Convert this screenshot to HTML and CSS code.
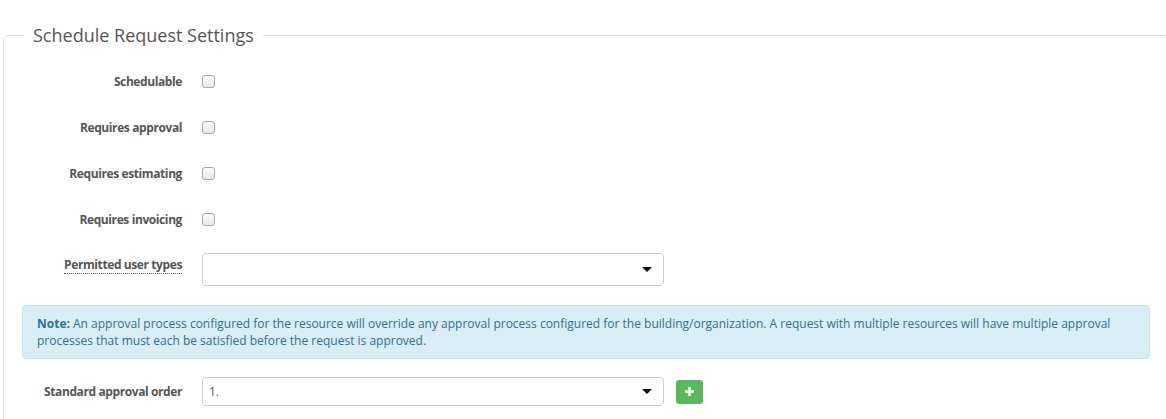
FILE: index.html
```html
<!DOCTYPE html>
<html>
<head>
<meta charset="utf-8">
<link rel="stylesheet" href="styles.css">
</head>
<body>
<fieldset class="settings">
  <legend class="settings-legend">Schedule Request Settings</legend>
  <div class="row row-check row-first">
    <label class="lbl">Schedulable</label>
    <div class="ctrl"><span class="checkbox"></span></div>
  </div>
  <div class="row row-check">
    <label class="lbl">Requires approval</label>
    <div class="ctrl"><span class="checkbox"></span></div>
  </div>
  <div class="row row-check">
    <label class="lbl">Requires estimating</label>
    <div class="ctrl"><span class="checkbox"></span></div>
  </div>
  <div class="row row-check">
    <label class="lbl">Requires invoicing</label>
    <div class="ctrl"><span class="checkbox"></span></div>
  </div>
  <div class="row row-select">
    <label class="lbl lbl-dotted"><span>Permitted user types</span></label>
    <div class="ctrl">
      <div class="select select-tall"><span class="select-value"></span><span class="caret"></span></div>
    </div>
  </div>
  <div class="note">
    <strong>Note:</strong> An approval process configured for the resource will override any approval process configured for the building/organization. A request with multiple resources will have multiple approval processes that must each be satisfied before the request is approved.
  </div>
  <div class="row row-order">
    <label class="lbl">Standard approval order</label>
    <div class="ctrl ctrl-inline">
      <div class="select select-short"><span class="select-value">1.</span><span class="caret"></span></div>
      <button class="add-btn" type="button">
        <svg width="11" height="11" viewBox="0 0 11 11"><path d="M5.5 1v9M1 5.5h9" stroke="#fff" stroke-width="2.6" fill="none"/></svg>
      </button>
    </div>
  </div>
</fieldset>
</body>
</html>
```

FILE: styles.css
```css
html, body {
  margin: 0;
  padding: 0;
  background: #fff;
}
body {
  font-family: "Open Sans", "Noto Sans", sans-serif;
  color: #555;
  font-size: 12px;
  overflow: hidden;
}
.settings {
  margin: 23px -20px 0 3px;
  padding: 11px 0 20px 0;
  border: 1px solid #e3e3e3;
  border-radius: 5px 0 0 0;
  min-width: 0;
}
.settings-legend {
  margin-left: 20px;
  padding: 0 9px;
  font-size: 18px;
  color: #555;
  font-weight: normal;
  line-height: 24px;
}
.row {
  display: flex;
  align-items: center;
}
.lbl {
  width: 178px;
  text-align: right;
  font-weight: bold;
  font-size: 12px;
  letter-spacing: -0.4px;
  color: #555;
  flex: none;
}
.ctrl {
  margin-left: 20px;
}
.row-check {
  height: 46px;
}
.checkbox {
  display: block;
  width: 11px;
  height: 11px;
  border: 1px solid #a9a9a9;
  border-radius: 3px;
  background: linear-gradient(#fcfcfc, #e8e8e8);
}
.row-select {
  margin-top: 11px;
  align-items: flex-start;
}
.lbl-dotted span {
  border-bottom: 1px dotted #555;
  line-height: 16px;
  display: inline-block;
  margin-top: 4px;
}
.select {
  box-sizing: border-box;
  width: 462px;
  border: 1px solid #ccc;
  border-radius: 4px;
  display: flex;
  align-items: center;
  justify-content: space-between;
  padding: 0 11px 0 6px;
  background: #fff;
  color: #555;
  font-size: 12px;
}
.select-tall {
  height: 33px;
}
.select-short {
  height: 29px;
}
.caret {
  width: 0;
  height: 0;
  border-left: 5px solid transparent;
  border-right: 5px solid transparent;
  border-top: 5px solid #000;
}
.note {
  margin: 19px 35px 0 18px;
  padding: 9px 14px 9px 14px;
  background: #d9edf7;
  border: 1px solid #bce8f1;
  border-radius: 4px;
  color: #31708f;
  line-height: 17px;
  font-size: 12px;
}
.note strong {
  font-weight: bold;
}
.row-order {
  margin-top: 18px;
}
.ctrl-inline {
  display: flex;
  align-items: center;
  gap: 12px;
}
.add-btn {
  width: 27px;
  height: 24px;
  border: none;
  border-radius: 3px;
  background: #5cb85c;
  display: flex;
  align-items: center;
  justify-content: center;
  padding: 0;
}
```
